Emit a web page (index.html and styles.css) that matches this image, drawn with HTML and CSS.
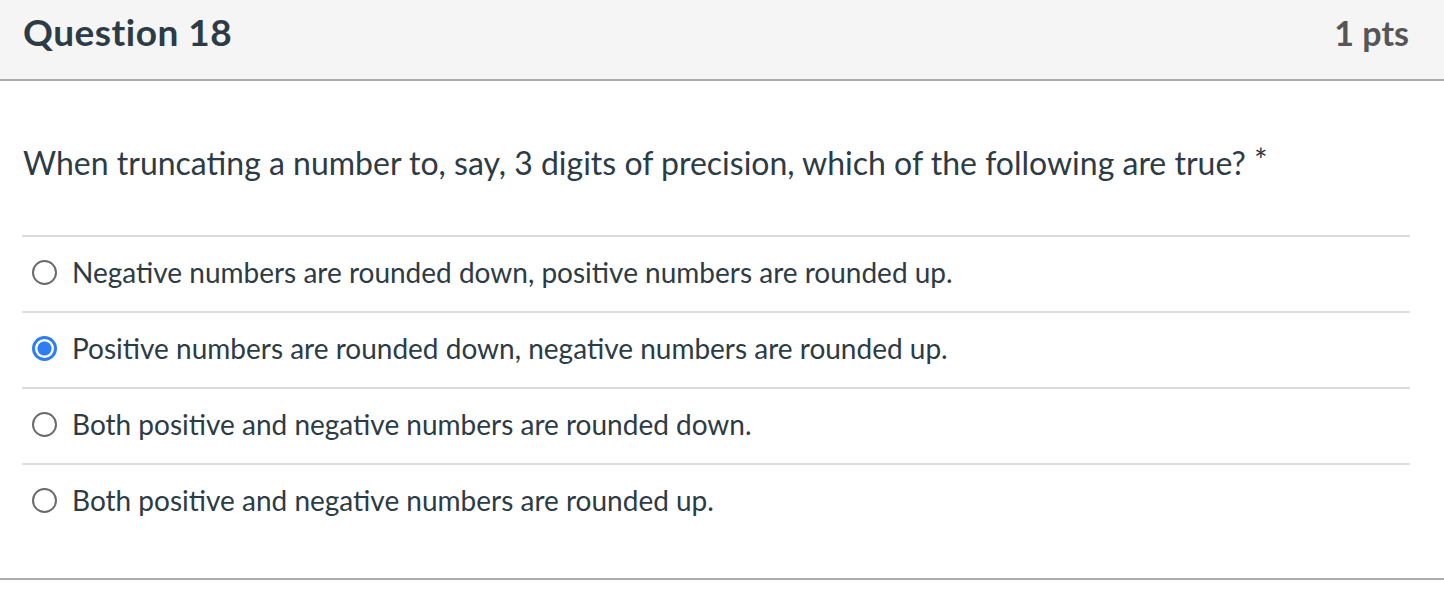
FILE: index.html
```html
<!DOCTYPE html>
<html lang="en">
<head>
<meta charset="utf-8">
<title>Question 18</title>
<link rel="stylesheet" href="styles.css">
</head>
<body>
<div class="question">
  <div class="header">
    <h2 class="title">Question 18</h2>
    <div class="points">1 pts</div>
  </div>
  <div class="content">
    <p class="prompt">When truncating a number to, say, 3 digits of precision, which of the following are true? <span class="req">*</span></p>
    <div class="answers">
      <label class="answer"><span class="radio"></span><span class="text">Negative numbers are rounded down, positive numbers are rounded up.</span></label>
      <label class="answer"><span class="radio checked"></span><span class="text">Positive numbers are rounded down, negative numbers are rounded up.</span></label>
      <label class="answer"><span class="radio"></span><span class="text">Both positive and negative numbers are rounded down.</span></label>
      <label class="answer"><span class="radio"></span><span class="text">Both positive and negative numbers are rounded up.</span></label>
    </div>
  </div>
</div>
</body>
</html>
```
FILE: styles.css
```css
html, body {
  margin: 0;
  padding: 0;
  background: #ffffff;
}
body {
  font-family: Lato, "Open Sans", sans-serif;
  color: #2d3b45;
}
.question {
  border-bottom: 2px solid #ababab;
  width: 1444px;
}
.header {
  box-sizing: border-box;
  height: 81px;
  background: #f5f5f5;
  border-bottom: 2px solid #ababab;
  display: flex;
  align-items: baseline;
  justify-content: space-between;
  padding: 10px 35px 0 23px;
}
.title {
  margin: 0;
  font-size: 37px;
  line-height: 44px;
  letter-spacing: 0.5px;
  font-weight: 700;
  color: #2d3b45;
}
.points {
  font-size: 34px;
  line-height: 44px;
  font-weight: 700;
  color: #565656;
}
.content {
  padding: 0 34px 39px 22px;
}
.prompt {
  margin: 0;
  padding: 59px 0 50px 1px;
  font-size: 32px;
  line-height: 45px;
}
.req {
  font-size: 32px;
  line-height: 0;
  position: relative;
  top: -3px;
}
.answer {
  display: flex;
  align-items: center;
  gap: 15px;
  box-sizing: border-box;
  height: 76px;
  border-top: 2px solid #dddddd;
  padding: 0 0 4px 10px;
}
.radio {
  box-sizing: border-box;
  width: 25px;
  height: 25px;
  border-radius: 50%;
  border: 2px solid #6b6b6b;
  flex: none;
}
.radio.checked {
  border: 3px solid #2e7cf6;
  background: radial-gradient(circle, #2e7cf6 0 6.5px, #ffffff 7.5px);
}
.text {
  font-size: 28px;
}
```
